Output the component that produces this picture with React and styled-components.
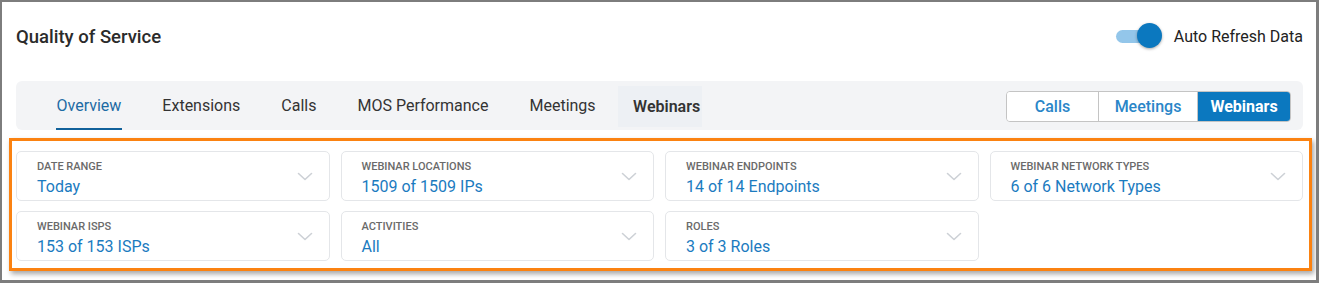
import styled, { createGlobalStyle } from 'styled-components';

const GlobalStyle = createGlobalStyle`
    html, body {
        margin: 0;
        padding: 0;
        background: #ffffff;
    }
    * {
        box-sizing: border-box;
    }
    body {
        font-family: Roboto, 'Liberation Sans', Arial, sans-serif;
        color: #333333;
    }
`;

const tabs = ['Overview', 'Extensions', 'Calls', 'MOS Performance', 'Meetings', 'Webinars'];

const segments = [
    { label: 'Calls', width: 91 },
    { label: 'Meetings', width: 99 },
    { label: 'Webinars', width: 93, active: true },
];

const filters = [
    { title: 'Date Range', value: 'Today' },
    { title: 'Webinar Locations', value: '1509 of 1509 IPs' },
    { title: 'Webinar Endpoints', value: '14 of 14 Endpoints' },
    { title: 'Webinar Network Types', value: '6 of 6 Network Types' },
    { title: 'Webinar ISPs', value: '153 of 153 ISPs' },
    { title: 'Activities', value: 'All' },
    { title: 'Roles', value: '3 of 3 Roles' },
];

const Chevron = () => (
    <svg width="16" height="9" viewBox="0 0 16 9" fill="none">
        <polyline points="1.5,1.5 8,7.5 14.5,1.5" stroke="#cdd1d6" strokeWidth="1.6" strokeLinecap="round" strokeLinejoin="round" />
    </svg>
);

const FilterCard = ({ title, value }) => (
    <Card>
        <CardText>
            <CardLabel>{title}</CardLabel>
            <CardValue>{value}</CardValue>
        </CardText>
        <Chevron />
    </Card>
);

const App = () => {
    return (
        <>
            <GlobalStyle />
            <Frame>
                <Header>
                    <Title>Quality of Service</Title>
                    <RefreshToggle>
                        <Switch>
                            <Track />
                            <Thumb />
                        </Switch>
                        <ToggleLabel>Auto Refresh Data</ToggleLabel>
                    </RefreshToggle>
                </Header>
                <TabBar>
                    <TabList>
                        {tabs.map((t, ind) => (
                            <Tab key={t} $active={ind === 0} $current={t === 'Webinars'}>
                                {t}
                            </Tab>
                        ))}
                    </TabList>
                    <Segmented>
                        {segments.map((s) => (
                            <Segment key={s.label} $active={s.active} $width={s.width}>
                                {s.label}
                            </Segment>
                        ))}
                    </Segmented>
                </TabBar>
                <FilterBox>
                    {filters.map((f) => (
                        <FilterCard key={f.title} title={f.title} value={f.value} />
                    ))}
                </FilterBox>
            </Frame>
        </>
    );
};

export default App;

const Frame = styled.div`
    width: 1319px;
    height: 283px;
    border: 2px solid #7d7d7d;
    border-right-width: 3px;
    border-bottom-width: 3px;
    background: #ffffff;
    overflow: hidden;
`;

const Header = styled.div`
    height: 70px;
    padding: 0 13px 0 14px;
    display: flex;
    align-items: center;
    justify-content: space-between;
`;

const Title = styled.h1`
    margin: 0;
    font-size: 18.5px;
    font-weight: 500;
    color: #2b2b2b;
`;

const RefreshToggle = styled.div`
    display: flex;
    align-items: center;
    gap: 12px;
    margin-top: -2px;
`;

const Switch = styled.div`
    position: relative;
    width: 46px;
    height: 26px;
    display: flex;
    align-items: center;
`;

const Track = styled.div`
    width: 38px;
    height: 13px;
    border-radius: 7px;
    background: #93c6ea;
`;

const Thumb = styled.div`
    position: absolute;
    right: 0;
    top: 0;
    width: 25px;
    height: 25px;
    border-radius: 50%;
    background: #0b78bf;
    box-shadow: 0 1px 3px rgba(0, 0, 0, 0.35);
`;

const ToggleLabel = styled.span`
    font-size: 16px;
    color: #222222;
`;

const TabBar = styled.div`
    margin: 9px 13px 0 14px;
    height: 49px;
    border-radius: 6px;
    background: #f3f4f6;
    display: flex;
    align-items: stretch;
    justify-content: space-between;
    padding: 0 12px 0 20px;
`;

const TabList = styled.div`
    display: flex;
    align-items: stretch;
`;

const Tab = styled.div`
    display: flex;
    align-items: center;
    padding: ${(p) => (p.$current ? '0 2px 0 15px' : '0 20.5px')};
    margin: ${(p) => (p.$current ? '5px 0 3px 2px' : '0')};
    font-size: 16px;
    font-weight: ${(p) => (p.$current ? 600 : 400)};
    color: ${(p) => (p.$active ? '#1d6ba4' : '#333333')};
    background: ${(p) => (p.$current ? '#edf0f4' : 'transparent')};
    position: relative;

    &::after {
        content: '';
        display: ${(p) => (p.$active ? 'block' : 'none')};
        position: absolute;
        left: 20px;
        right: 20px;
        bottom: 0;
        height: 2px;
        background: #11619a;
    }
`;

const Segmented = styled.div`
    align-self: center;
    display: flex;
    height: 31px;
    border: 1px solid #c4c4c4;
    border-radius: 4px;
    overflow: hidden;
    margin-top: 1px;
`;

const Segment = styled.div`
    width: ${(p) => p.$width}px;
    display: flex;
    align-items: center;
    justify-content: center;
    font-size: 16px;
    font-weight: ${(p) => (p.$active ? 700 : 500)};
    color: ${(p) => (p.$active ? '#ffffff' : '#2a86c8')};
    background: ${(p) => (p.$active ? '#0b78bf' : '#ffffff')};

    & + & {
        border-left: 1px solid #c4c4c4;
    }
`;

const FilterBox = styled.div`
    margin: 8px 4px 0 7px;
    height: 133px;
    border: 3px solid #fb8211;
    box-shadow: 2px 3px 5px rgba(0, 0, 0, 0.35);
    padding: 10px 6px 0 4px;
    display: grid;
    grid-template-columns: repeat(4, 1fr);
    grid-auto-rows: 50px;
    column-gap: 11px;
    row-gap: 10px;
`;

const Card = styled.div`
    border: 1px solid #e4e6e9;
    border-radius: 5px;
    background: #ffffff;
    display: flex;
    align-items: center;
    justify-content: space-between;
    padding: 0 16px 0 20px;
`;

const CardText = styled.div`
    display: flex;
    flex-direction: column;
    gap: 3px;
    margin-top: 5px;
`;

const CardLabel = styled.span`
    font-size: 11px;
    line-height: 14px;
    font-weight: 500;
    text-transform: uppercase;
    color: #6a6a6a;
`;

const CardValue = styled.span`
    font-size: 16px;
    line-height: 20px;
    color: #1b7bbf;
`;
